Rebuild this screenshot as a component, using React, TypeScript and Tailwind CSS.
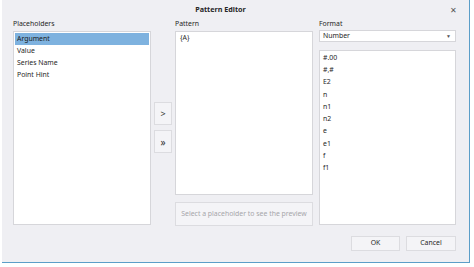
const placeholders = ["Argument", "Value", "Series Name", "Point Hint"];
const formats = ["#.00", "#,#", "E2", "n", "n1", "n2", "e", "e1", "f", "f1"];

export default function App() {
  return (
    <div
      className="w-[474px] h-[267px] bg-white text-[6.9px] text-[#262626] leading-none"
      style={{ fontFamily: '"Noto Sans", "Open Sans", sans-serif' }}
    >
      <div className="ml-[2px] w-[468px] h-[263px] bg-[#efeff3] border-r border-b border-[#5b9ec8] flex flex-col">
        {/* title bar */}
        <div className="h-[20px] flex items-center relative">
          <div className="flex-1 text-center font-bold text-[7.2px] pr-[30px]">Pattern Editor</div>
          <div className="absolute right-[12px] top-[6px] text-[8px] text-[#555]">✕</div>
        </div>

        <div className="flex pl-[11px]">
          {/* placeholders */}
          <div className="w-[138px] flex flex-col">
            <div className="h-[11px] pt-[1px]">Placeholders</div>
            <div className="h-[194px] bg-white border border-[#d6d6da] p-px">
              {placeholders.map((p, i) => (
                <div
                  key={p}
                  className={
                    "h-[12px] flex items-center pl-[2px] " +
                    (i === 0 ? "bg-[#7eb2df] text-[#1a1a1a]" : "")
                  }
                >
                  {p}
                </div>
              ))}
            </div>
          </div>

          {/* move buttons */}
          <div className="w-[18px] ml-[3px] flex flex-col pt-[82px] gap-[5px]">
            <div className="h-[23px] bg-[#f4f4f7] border border-[#dcdce0] flex items-center justify-center text-[9px] text-[#333]">
              &gt;
            </div>
            <div className="h-[23px] bg-[#f4f4f7] border border-[#dcdce0] flex items-center justify-center text-[10px] text-[#333]">
              »
            </div>
          </div>

          {/* pattern */}
          <div className="w-[138px] ml-[3px] flex flex-col">
            <div className="h-[11px] pt-[1px]">Pattern</div>
            <div className="h-[164px] bg-white border border-[#d6d6da] px-[4px] pt-[3px]">{"{A}"}</div>
            <div className="mt-[7px] h-[24px] bg-[#f4f4f7] border border-[#dcdce0] flex items-center justify-center text-[#a6a6aa] whitespace-nowrap">
              Select a placeholder to see the preview
            </div>
          </div>

          {/* format */}
          <div className="w-[137px] ml-[6px] flex flex-col">
            <div className="h-[10px] pt-[1px]">Format</div>
            <div className="h-[12px] bg-white border border-[#d6d6da] flex items-center justify-between pl-[3px] pr-[4px]">
              <span>Number</span>
              <span className="text-[5px] text-[#555]">▼</span>
            </div>
            <div className="mt-[8px] h-[175px] bg-white border border-[#d6d6da] pt-[1px] pl-[3px]">
              {formats.map((f) => (
                <div key={f} className="h-[12.3px] flex items-center">
                  {f}
                </div>
              ))}
            </div>
          </div>
        </div>

        {/* footer */}
        <div className="flex justify-end gap-[6px] pr-[13px] mt-[10px]">
          <div className="w-[49px] h-[15px] bg-[#f4f4f7] border border-[#dcdce0] flex items-center justify-center">
            OK
          </div>
          <div className="w-[50px] h-[15px] bg-[#f4f4f7] border border-[#dcdce0] flex items-center justify-center">
            Cancel
          </div>
        </div>
      </div>
    </div>
  );
}
